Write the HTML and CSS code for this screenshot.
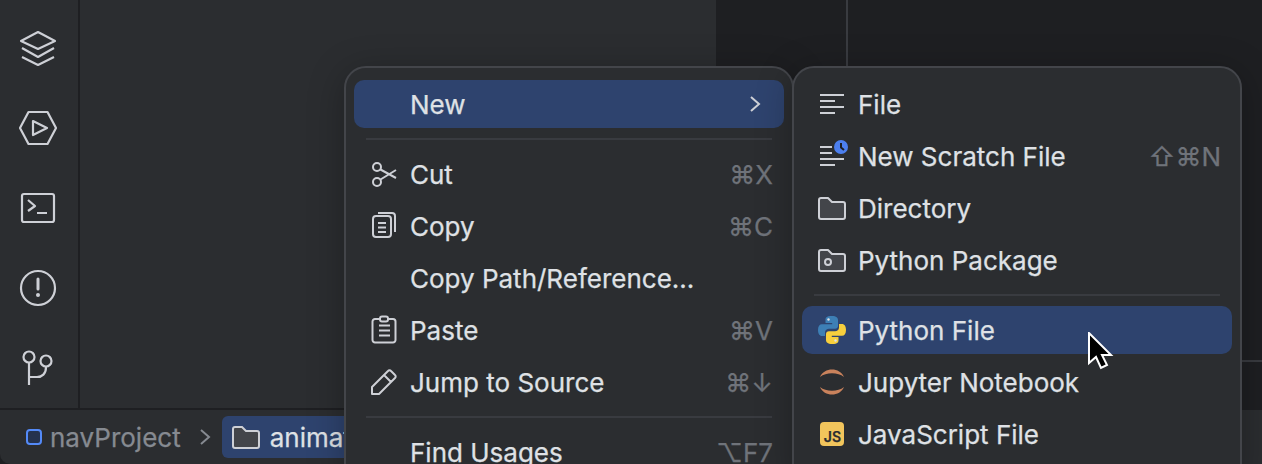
FILE: index.html
```html
<!DOCTYPE html>
<html lang="en">
<head>
<meta charset="utf-8">
<title>New Python File</title>
<link rel="stylesheet" href="styles.css">
</head>
<body>
<div class="app">
  <div class="main">
    <nav class="toolbar">
      <svg class="tool" viewBox="0 0 40 40"><path d="M20 4 37 13 20 21 3 13Z M4 20 20 29 36 20 M4 29 20 37 36 29"/></svg>
      <svg class="tool" viewBox="0 0 40 40"><path d="M2 20 10.500 4H29.500L38 20 29.500 36H10.500Z M15 13 29 20 15 27Z"/></svg>
      <svg class="tool" viewBox="0 0 40 40"><rect x="4" y="6" width="32" height="28" rx="2"/><path d="M10 12 17 18 10 23 M19 25H29"/></svg>
      <svg class="tool" viewBox="0 0 40 40"><circle cx="20" cy="20" r="17"/><path class="thick" d="M20 11V21"/><circle class="dot" cx="20" cy="27" r="2"/></svg>
      <svg class="tool" viewBox="0 0 40 40"><circle cx="11" cy="9" r="5.500"/><circle cx="28" cy="13" r="5.500"/><path d="M11 15V37 M28 19C28 26 24 29 19 29H11"/></svg>
    </nav>
    <div class="panel"></div>
    <div class="editor">
      <div class="editor-top"><div class="split"></div></div>
      <div class="editor-bottom"></div>
    </div>
  </div>
  <footer class="crumbs">
    <span class="module"></span>
    <span class="crumb">navProject</span>
    <svg class="crumb-arrow" viewBox="0 0 12 18"><path d="M2 2 10 9 2 16"/></svg>
    <span class="crumb-current">
      <svg class="crumb-folder" viewBox="0 0 32 32"><path d="M3 8a2 2 0 0 1 2-2h7l4 4h11a2 2 0 0 1 2 2v13a2 2 0 0 1-2 2H5a2 2 0 0 1-2-2Z"/></svg>
      <span>animations</span>
    </span>
  </footer>
</div>

<div class="menu menu-main">
  <div class="row active"><span class="icon"></span><span class="label">New</span><svg class="sub" viewBox="0 0 12 18"><path d="M2 2 10 9 2 16"/></svg></div>
  <div class="sep"></div>
  <div class="row">
    <svg class="icon" viewBox="0 0 32 32"><circle cx="9" cy="9" r="4"/><circle cx="9" cy="24" r="4"/><path d="M12.500 11.500 28 20 M12.500 21.500 28 12"/></svg>
    <span class="label">Cut</span><span class="keys">⌘X</span></div>
  <div class="row">
    <svg class="icon" viewBox="0 0 32 32"><rect x="5" y="6" width="18" height="21" rx="3"/><path d="M10 3H24a3 3 0 0 1 3 3V22 M10 13H18 M10 17.500H18 M10 22H18"/></svg>
    <span class="label">Copy</span><span class="keys">⌘C</span></div>
  <div class="row"><span class="icon"></span><span class="label">Copy Path/Reference...</span></div>
  <div class="row">
    <svg class="icon" viewBox="0 0 32 32"><path d="M12 5H7a2.500 2.500 0 0 0-2.500 2.500V26A2.500 2.500 0 0 0 7 28.500H25a2.500 2.500 0 0 0 2.500-2.500V7.500A2.500 2.500 0 0 0 25 5H20"/><rect x="12" y="2.500" width="8" height="5" rx="2"/><path d="M11 11.500H22 M11 16.500H22 M11 21.500H22"/></svg>
    <span class="label">Paste</span><span class="keys">⌘V</span></div>
  <div class="row">
    <svg class="icon" viewBox="0 0 32 32"><path d="M4 28V21L20 5a2 2 0 0 1 3 0l4 4a2 2 0 0 1 0 3L11 28Z M16 9 23 16"/></svg>
    <span class="label">Jump to Source</span><span class="keys">⌘↓</span></div>
  <div class="sep"></div>
  <div class="row"><span class="icon"></span><span class="label">Find Usages</span><span class="keys">⌥F7</span></div>
</div>

<div class="menu menu-sub">
  <div class="row">
    <svg class="icon" viewBox="0 0 32 32"><path d="M4 7H28 M4 13H19 M4 19H28 M4 25H19"/></svg>
    <span class="label">File</span></div>
  <div class="row">
    <svg class="icon" viewBox="0 0 32 32"><path d="M4 7H16 M4 13H16 M4 19H28 M4 25H19"/><circle class="badge" cx="25" cy="7" r="7"/><path class="hand" d="M25 3V7.500L28 10"/></svg>
    <span class="label">New Scratch File</span><span class="keys">⇧⌘N</span></div>
  <div class="row">
    <svg class="icon folder" viewBox="0 0 32 32"><path d="M3 8a2 2 0 0 1 2-2h7l4 4h11a2 2 0 0 1 2 2v13a2 2 0 0 1-2 2H5a2 2 0 0 1-2-2Z"/></svg>
    <span class="label">Directory</span></div>
  <div class="row">
    <svg class="icon folder" viewBox="0 0 32 32"><path d="M3 8a2 2 0 0 1 2-2h7l4 4h11a2 2 0 0 1 2 2v13a2 2 0 0 1-2 2H5a2 2 0 0 1-2-2Z"/><circle cx="12" cy="18" r="3"/></svg>
    <span class="label">Python Package</span></div>
  <div class="sep"></div>
  <div class="row active">
    <svg class="icon" viewBox="0 0 32 32">
      <path class="py-blue" d="M15.800 2C10 2 9.500 4 9.500 6V9H16.200V10.200H6C3.500 10.200 2 12.200 2 16 2 19.800 3.500 22 6 22H9V18.500C9 16 11 14.800 13 14.800H19C20.800 14.800 22 13.600 22 12V6C22 4 20.500 2 15.800 2Z"/>
      <circle class="py-eye" cx="12.500" cy="5.500" r="1.200"/>
      <g transform="rotate(180 16 16)">
        <path class="py-yellow" d="M15.800 2C10 2 9.500 4 9.500 6V9H16.200V10.200H6C3.500 10.200 2 12.200 2 16 2 19.800 3.500 22 6 22H9V18.500C9 16 11 14.800 13 14.800H19C20.800 14.800 22 13.600 22 12V6C22 4 20.500 2 15.800 2Z"/>
        <circle class="py-eye" cx="12.500" cy="5.500" r="1.200"/>
      </g>
    </svg>
    <span class="label">Python File</span></div>
  <div class="row">
    <svg class="icon" viewBox="0 0 32 32"><path class="jupyter" d="M4 11C8 1 24 1 28 11 22 6 10 6 4 11Z M4 21C10 26 22 26 28 21 24 31 8 31 4 21Z"/></svg>
    <span class="label">Jupyter Notebook</span></div>
  <div class="row">
    <span class="icon"><span class="js">JS</span></span>
    <span class="label">JavaScript File</span></div>
</div>

<svg class="pointer" viewBox="0 0 26 38"><path d="M1 1V31L8 25 13 36 19 33 14 23H23Z"/></svg>
</body>
</html>
```
FILE: styles.css
```css
* { box-sizing: border-box; }
html, body { margin: 0; height: 100%; overflow: hidden; background: #1e1f22; }
body { font-family: Inter, "Noto Sans", "DejaVu Sans", sans-serif; font-size: 26px; color: #dfe1e5; -webkit-text-stroke: 0.25px currentColor; }

.app { display: flex; flex-direction: column; height: 464px; width: 1262px; background: #2b2d30; border-bottom-left-radius: 10px; overflow: hidden; }
.main { flex: 1; display: flex; min-height: 0; }

.toolbar { width: 80px; flex: none; padding: 28px 2px 0 0; display: flex; flex-direction: column; align-items: center; gap: 40px; border-right: 2px solid #1e1f22; }
.tool { width: 40px; height: 40px; flex: none; fill: none; stroke: #ced0d6; stroke-width: 2.200; stroke-linejoin: round; }
.tool .thick { stroke-width: 3; stroke-linecap: round; }
.tool .dot { fill: #ced0d6; stroke: none; }

.panel { flex: 1; }
.editor { width: 546px; flex: none; background: #1e1f22; display: flex; flex-direction: column; }
.editor-top { flex: 1; }
.split { width: 132px; height: 100%; border-right: 2px solid #393b40; }
.editor-bottom { height: 48px; border-top: 2px solid #393b40; }

.crumbs { height: 56px; flex: none; border-top: 2px solid #1e1f22; padding-left: 26px; display: flex; align-items: center; }
.module { width: 16px; height: 16px; border: 2px solid #548af7; border-radius: 4px; background: #25324d; margin-right: 8px; }
.crumb { color: #868a91; }
.crumb-arrow { width: 12px; height: 18px; margin: 0 11px 0 18px; fill: none; stroke: #868a91; stroke-width: 2; }
.crumb-current { height: 42px; display: flex; align-items: center; gap: 8px; padding: 0 8px; background: #2e436e; border-radius: 6px; }
.crumb-folder { width: 32px; height: 32px; fill: #43454a; stroke: #ced0d6; stroke-width: 2; }

.menu { position: absolute; top: 66px; width: 450px; height: 420px; padding: 10px 8px; display: flex; flex-direction: column; background: #2b2d30; border: 2px solid #43454a; border-radius: 22px; box-shadow: 0 6px 36px rgba(0, 0, 0, .28); }
.menu-main { left: 344px; }
.menu-sub { left: 792px; }

.row { height: 48px; flex: none; margin: 2px 0; padding: 0 11px 0 14px; display: flex; align-items: center; border-radius: 10px; white-space: nowrap; }
.row.active { background: #2e436e; }
.label { margin-left: 10px; flex: 1; }
.keys { color: #6f737a; }
.sep { height: 2px; flex: none; margin: 8px 12px; background: #393b40; }
.sub { width: 12px; height: 18px; margin-right: 12px; fill: none; stroke: #ced0d6; stroke-width: 2; }

.icon { width: 32px; height: 32px; flex: none; display: flex; align-items: center; justify-content: center; fill: none; stroke: #ced0d6; stroke-width: 2; stroke-linejoin: round; }
.folder path { fill: #43454a; }
.badge { fill: #4c7fef; stroke: none; }
.hand { stroke: #1e1f22; stroke-width: 2; }
.py-blue { fill: #3d7fb5; stroke: none; }
.py-yellow { fill: #f7cf3d; stroke: none; }
.py-eye { fill: #dfe1e5; stroke: none; }
.jupyter { fill: #c9825c; stroke: none; }
.js { width: 24px; height: 24px; padding: 0 3px 1px 0; display: flex; align-items: flex-end; justify-content: flex-end; border-radius: 4px; background: #f2c55c; color: #2b2d30; font-size: 14px; line-height: 16px; font-weight: 600; }

.pointer { position: absolute; left: 1088px; top: 332px; width: 26px; height: 38px; fill: #000; stroke: #fff; stroke-width: 2; }
```
